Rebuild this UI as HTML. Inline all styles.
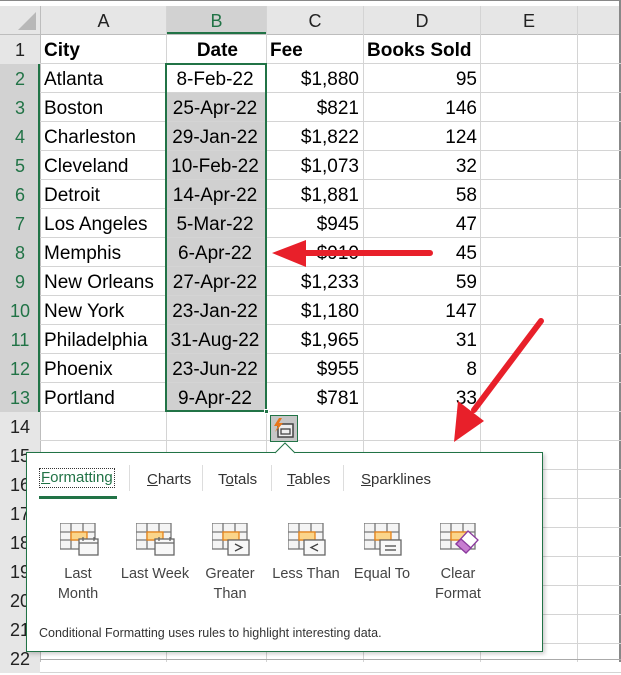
<!DOCTYPE html>
<html><head><meta charset="utf-8"><style>
*{margin:0;padding:0;box-sizing:border-box}
body{width:621px;height:662px;overflow:hidden;background:#fff;font-family:"Liberation Sans",sans-serif;position:relative}
.a{position:absolute}
.hl{position:absolute;left:0;width:621px;height:1px;background:#d4d4d4}
.vl{position:absolute;top:6px;width:1px;height:656px;background:#d4d4d4}
.ch{position:absolute;top:6px;height:28px;background:#e6e6e6;font-size:18px;text-align:center;line-height:30px;color:#222}
.rh{position:absolute;left:0;width:40px;height:29px;background:#e6e6e6;font-size:18px;text-align:center;line-height:31px;color:#222}
.c{position:absolute;height:29px;line-height:31px;font-size:19px;color:#000;white-space:nowrap}
.t{font-size:15px;color:#333;position:absolute;top:471px}
.lb{position:absolute;font-size:14.5px;color:#444;text-align:center;line-height:20px;top:564px}
</style></head><body>
<div class="a" style="left:0;top:0;width:621px;height:6px;background:#fff;border-top:1px solid #888"></div>
<div class="a" style="left:0;top:6px;width:40px;height:28px;background:#e6e6e6"></div>
<svg class="a" style="left:16px;top:10px" width="22" height="22"><polygon points="20,2 20,20 2,20" fill="#b8b8b8"/></svg>
<div class="ch" style="left:41px;width:125px">A</div>
<div class="ch" style="left:167px;width:99px;background:#d2d2d2;color:#217346;border-bottom:2px solid #217346">B</div>
<div class="ch" style="left:267px;width:96px">C</div>
<div class="ch" style="left:364px;width:116px">D</div>
<div class="ch" style="left:481px;width:96px">E</div>
<div class="ch" style="left:578px;width:42px"></div>
<div class="a" style="left:0;top:34px;width:621px;height:1px;background:#bdbdbd"></div>
<div class="vl" style="left:40px;background:#bdbdbd"></div>
<div class="vl" style="left:166px"></div><div class="vl" style="left:266px"></div><div class="vl" style="left:363px"></div><div class="vl" style="left:480px"></div><div class="vl" style="left:577px"></div>
<div class="a" style="left:619px;top:0;width:2px;height:662px;background:#888"></div>
<div class="a" style="left:0;top:659px;width:621px;height:1px;background:#aaa"></div>
<div class="a" style="left:167px;top:93px;width:99px;height:319px;background:#d0d0d0"></div>
<div id="rows"></div>
<script>
var d=[["City","Date","Fee","Books Sold"],["Atlanta","8-Feb-22","$1,880","95"],["Boston","25-Apr-22","$821","146"],["Charleston","29-Jan-22","$1,822","124"],["Cleveland","10-Feb-22","$1,073","32"],["Detroit","14-Apr-22","$1,881","58"],["Los Angeles","5-Mar-22","$945","47"],["Memphis","6-Apr-22","$910","45"],["New Orleans","27-Apr-22","$1,233","59"],["New York","23-Jan-22","$1,180","147"],["Philadelphia","31-Aug-22","$1,965","31"],["Phoenix","23-Jun-22","$955","8"],["Portland","9-Apr-22","$781","33"]];
var h="";
for(var n=1;n<=22;n++){var y=35+29*(n-1);
h+='<div class="hl" style="top:'+(y+28)+'px"></div>';
var sel=(n>=2&&n<=13);
h+='<div class="rh" style="top:'+y+'px;'+(sel?'background:#d2d2d2;color:#217346;':'')+'">'+n+'</div>';
if(n<=13){var r=d[n-1];var b=n==1?'font-weight:bold;':'';
h+='<div class="c" style="left:44px;top:'+y+'px;'+b+'">'+r[0]+'</div>';
h+='<div class="c" style="left:166px;width:98px;text-align:'+(n==1?'right;padding-right:26px':'center')+';top:'+y+'px;'+b+'">'+r[1]+'</div>';
h+='<div class="c" style="left:266px;width:'+(n==1?'200':'93')+'px;text-align:'+(n==1?'left;padding-left:4px':'right')+';top:'+y+'px;'+b+'">'+r[2]+'</div>';
if(n==1)h+='<div class="c" style="left:367px;top:'+y+'px;'+b+'">'+r[3]+'</div>';else h+='<div class="c" style="left:363px;width:114px;text-align:right;top:'+y+'px">'+r[3]+'</div>';}
}
document.getElementById("rows").innerHTML=h;
</script>
<div class="a" style="left:38px;top:64px;width:2px;height:348px;background:#217346"></div>
<div class="a" style="left:165px;top:63px;width:102px;height:349px;border:2px solid #217346"></div>
<div class="a" style="left:264px;top:409px;width:5px;height:5px;background:#217346;border:1px solid #fff"></div>
<div class="a" style="left:270px;top:415px;width:28px;height:27px;background:#c6c6c6;border:1px solid #217346"></div>
<svg class="a" style="left:272px;top:417px" width="24" height="24"><rect x="6" y="7" width="15" height="13" fill="#eee" stroke="#444" stroke-width="1.5"/><rect x="9" y="12" width="9" height="5" fill="none" stroke="#444" stroke-width="1.3"/><path d="M7 1 L2 9 L6 9 L3 15 L11 6 L7 6 L10 1Z" fill="#e8761a"/></svg>
<div class="a" style="left:26px;top:452px;width:517px;height:200px;background:#fff;border:1px solid #217346;box-shadow:2px 2px 4px rgba(0,0,0,.2)"></div>
<svg class="a" style="left:275px;top:442px" width="20" height="12"><path d="M0 11 L10 1 L20 11" fill="#fff" stroke="#217346"/></svg>
<div class="t" style="left:40px;color:#217346;outline:1px dotted #333;padding:0 1px;line-height:18px;top:469px"><u>F</u>ormatting</div>
<div class="a" style="left:39px;top:496px;width:78px;height:3px;background:#217346"></div>
<div class="a" style="left:129px;top:465px;width:1px;height:26px;background:#ddd"></div>
<div class="t" style="left:147px"><u>C</u>harts</div>
<div class="a" style="left:202px;top:465px;width:1px;height:26px;background:#ddd"></div>
<div class="t" style="left:218px">T<u>o</u>tals</div>
<div class="a" style="left:271px;top:465px;width:1px;height:26px;background:#ddd"></div>
<div class="t" style="left:287px"><u>T</u>ables</div>
<div class="a" style="left:343px;top:465px;width:1px;height:26px;background:#ddd"></div>
<div class="t" style="left:361px"><u>S</u>parklines</div>
<svg width="0" height="0" style="position:absolute"><defs>
<g id="g"><rect x="0" y="0" width="35" height="26" fill="#f4f4f4" stroke="#777" stroke-width="1.3"/><path d="M0 9H35M0 17H35M11 0V26M23 0V26" stroke="#777" stroke-width="1.3"/><rect x="11" y="9" width="16" height="8" fill="#fbd58a" stroke="#e8841a" stroke-width="1.3"/></g>
</defs></svg>
<svg class="a" style="left:60px;top:523px" width="40" height="34"><use href="#g"/><rect x="19" y="16" width="19" height="16" fill="#f8f8f8" stroke="#666" stroke-width="1.3"/><path d="M19 20H38M23 14V18M34 14V18" stroke="#666" stroke-width="1.3"/></svg>
<svg class="a" style="left:136px;top:523px" width="40" height="34"><use href="#g"/><rect x="19" y="16" width="19" height="16" fill="#f8f8f8" stroke="#666" stroke-width="1.3"/><path d="M19 20H38M23 14V18M34 14V18" stroke="#666" stroke-width="1.3"/></svg>
<svg class="a" style="left:212px;top:523px" width="40" height="34"><use href="#g"/><rect x="16" y="17" width="21" height="15" fill="#f8f8f8" stroke="#666" stroke-width="1.3"/><path d="M23 21L30 24.5L23 28" fill="none" stroke="#444" stroke-width="1.3"/></svg>
<svg class="a" style="left:288px;top:523px" width="40" height="34"><use href="#g"/><rect x="16" y="17" width="21" height="15" fill="#f8f8f8" stroke="#666" stroke-width="1.3"/><path d="M30 21L23 24.5L30 28" fill="none" stroke="#444" stroke-width="1.3"/></svg>
<svg class="a" style="left:364px;top:523px" width="40" height="34"><use href="#g"/><rect x="16" y="17" width="21" height="15" fill="#f8f8f8" stroke="#666" stroke-width="1.3"/><path d="M21 23H32M21 27H32" stroke="#444" stroke-width="1.3"/></svg>
<svg class="a" style="left:440px;top:523px" width="40" height="34"><use href="#g"/><path d="M28 8L38 17L26 30L16 21Z" fill="#fff" stroke="#8b3a9e" stroke-width="1.3"/><path d="M21 16L31 25L26 30L16 21Z" fill="#c77dd0" stroke="#8b3a9e" stroke-width="1.3"/></svg>
<div class="lb" style="left:50px;width:56px">Last<br>Month</div>
<div class="lb" style="left:116px;width:78px">Last Week</div>
<div class="lb" style="left:196px;width:68px">Greater<br>Than</div>
<div class="lb" style="left:268px;width:76px">Less Than</div>
<div class="lb" style="left:346px;width:72px">Equal To</div>
<div class="lb" style="left:424px;width:68px">Clear<br>Format</div>
<div class="a" style="left:39px;top:626px;font-size:12.5px;color:#333">Conditional Formatting uses rules to highlight interesting data.</div>
<svg class="a" style="left:0;top:0" width="621" height="662">
<path d="M430 253 L302 253" stroke="#e8202a" stroke-width="6" stroke-linecap="round"/>
<polygon points="272,253 306,240 306,267" fill="#e8202a"/>
<path d="M541 321 L474 410" stroke="#e8202a" stroke-width="6" stroke-linecap="round"/>
<polygon points="454,442 484,421 458,401" fill="#e8202a"/>
</svg>
</body></html>
